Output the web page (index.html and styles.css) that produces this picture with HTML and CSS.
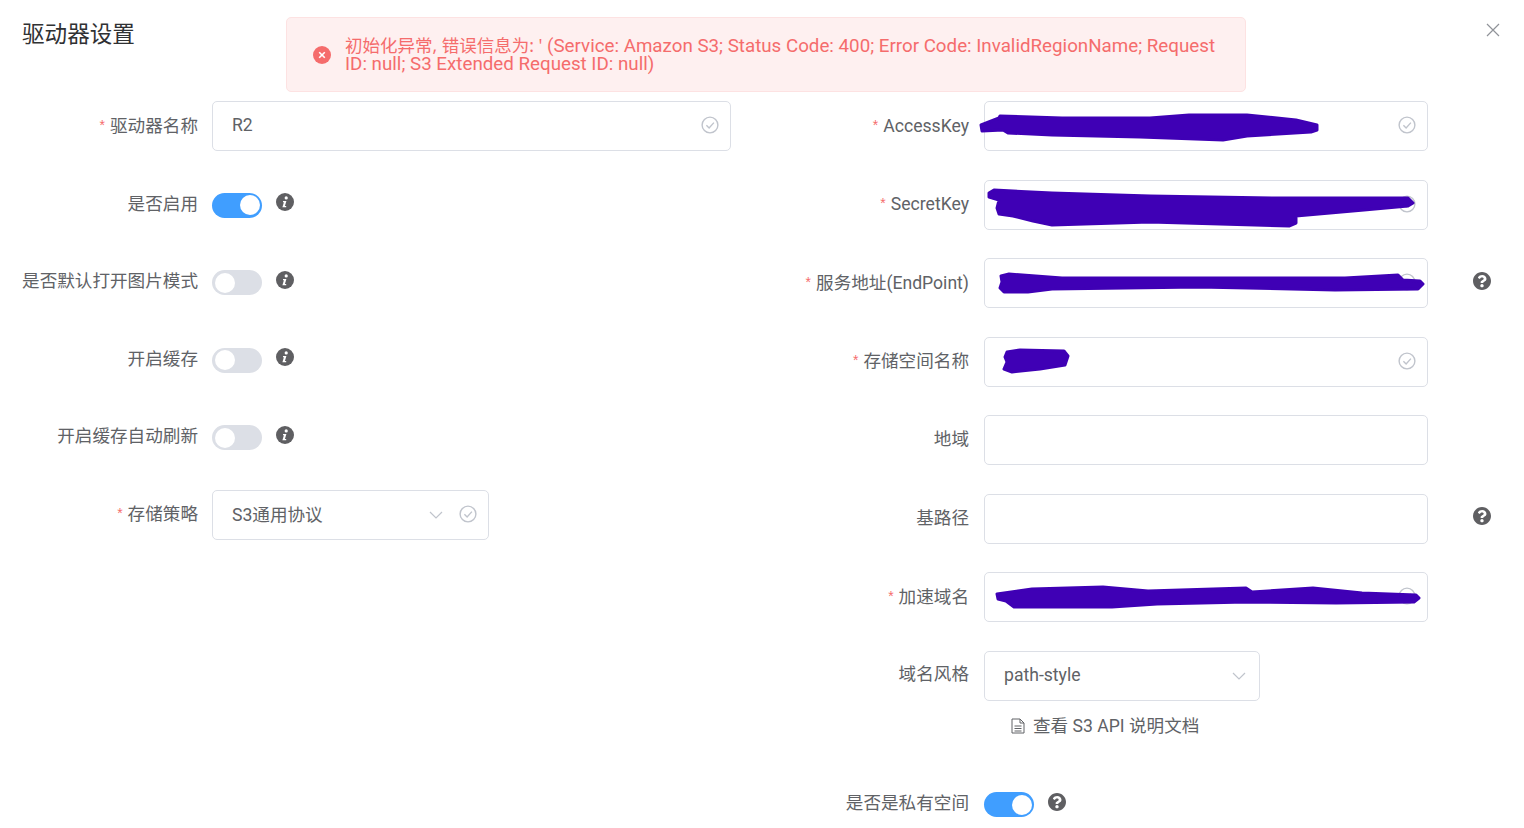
FILE: index.html
```html
<!DOCTYPE html>
<html lang="zh-CN">
<head>
<meta charset="utf-8">
<title>驱动器设置</title>
<link rel="stylesheet" href="styles.css">
</head>
<body>
<svg width="0" height="0" class="defs">
  <defs>
    <symbol id="check" viewBox="0 0 18 18"><circle cx="9" cy="9" r="7.9" fill="none" stroke="#c0c4cc" stroke-width="1.4"/><path d="M5.4 9.2l2.7 2.7 4.8-5.3" fill="none" stroke="#c0c4cc" stroke-width="1.4"/></symbol>
    <symbol id="chev" viewBox="0 0 14 14"><path d="M1 4l6 6 6-6" fill="none" stroke="#c0c4cc" stroke-width="1.2"/></symbol>
    <symbol id="info" viewBox="0 0 18 18"><circle cx="9" cy="9" r="9" fill="#5f5f62"/><circle cx="10.2" cy="4.9" r="1.6" fill="#fff"/><path d="M7 8h3.4l-1.5 5h1.3v1.2H6.4l1.5-5H7z" fill="#fff"/></symbol>
    <symbol id="ask" viewBox="8 8 496 496"><path fill="#5f5f62" d="M504 256c0 136.997-111.043 248-248 248S8 392.997 8 256C8 119.083 119.043 8 256 8s248 111.083 248 248zM262.655 90c-54.497 0-89.255 22.957-116.549 63.758-3.536 5.286-2.353 12.415 2.715 16.258l34.699 26.31c5.205 3.947 12.621 3.008 16.665-2.122 17.864-22.658 30.113-35.797 57.303-35.797 20.429 0 45.698 13.148 45.698 32.958 0 14.976-12.363 22.667-32.534 33.976C247.128 238.528 216 254.941 216 296v4c0 6.627 5.373 12 12 12h56c6.627 0 12-5.373 12-12v-1.333c0-28.462 83.186-29.647 83.186-106.667 0-58.002-60.165-102-116.531-102zM256 338c-25.365 0-46 20.635-46 46 0 25.364 20.635 46 46 46s46-20.636 46-46c0-25.365-20.635-46-46-46z"/></symbol>
  </defs>
</svg>

<header class="head">
  <h1 class="title">驱动器设置</h1>
  <svg class="close" viewBox="0 0 14 14"><path d="M1 1l12 12M13 1L1 13" stroke="#909399" stroke-width="1.2" fill="none"/></svg>
</header>

<div class="alert">
  <svg class="alert-icon" viewBox="0 0 18 18"><circle cx="9" cy="9" r="9" fill="#f56c6c"/><path d="M6.2 6.2l5.6 5.6M11.8 6.2l-5.6 5.6" stroke="#fff" stroke-width="1.6"/></svg>
  <p class="alert-text"><span class="cjk">初始化异常, 错误信息为: '</span> (Service: Amazon S3; Status Code: 400; Error Code: InvalidRegionName; Request ID: null; S3 Extended Request ID: null)</p>
</div>

<main class="form">
  <section class="col col-left">
    <div class="row row-first">
      <label class="label"><span class="req">*</span>驱动器名称</label>
      <div class="input input-wide"><span class="val">R2</span><svg class="ico"><use href="#check"/></svg></div>
    </div>
    <div class="row">
      <label class="label">是否启用</label>
      <span class="switch on"></span><svg class="tip"><use href="#info"/></svg>
    </div>
    <div class="row">
      <label class="label">是否默认打开图片模式</label>
      <span class="switch"></span><svg class="tip"><use href="#info"/></svg>
    </div>
    <div class="row">
      <label class="label">开启缓存</label>
      <span class="switch"></span><svg class="tip"><use href="#info"/></svg>
    </div>
    <div class="row">
      <label class="label">开启缓存自动刷新</label>
      <span class="switch"></span><svg class="tip"><use href="#info"/></svg>
    </div>
    <div class="row">
      <label class="label"><span class="req">*</span>存储策略</label>
      <div class="input input-select"><span class="val">S3通用协议</span><svg class="chev"><use href="#chev"/></svg><svg class="ico ico-after"><use href="#check"/></svg></div>
    </div>
  </section>

  <section class="col col-right">
    <div class="row">
      <label class="label"><span class="req">*</span>AccessKey</label>
      <div class="input input-full"><span class="val"></span><svg class="ico"><use href="#check"/></svg></div>
    </div>
    <div class="row">
      <label class="label"><span class="req">*</span>SecretKey</label>
      <div class="input input-full"><span class="val"></span><svg class="ico"><use href="#check"/></svg></div>
    </div>
    <div class="row">
      <label class="label"><span class="req">*</span>服务地址(EndPoint)</label>
      <div class="input input-full"><span class="val"></span><svg class="ico"><use href="#check"/></svg></div>
      <svg class="tip tip-far"><use href="#ask"/></svg>
    </div>
    <div class="row">
      <label class="label"><span class="req">*</span>存储空间名称</label>
      <div class="input input-full"><span class="val"></span><svg class="ico"><use href="#check"/></svg></div>
    </div>
    <div class="row">
      <label class="label">地域</label>
      <div class="input input-full"></div>
    </div>
    <div class="row">
      <label class="label">基路径</label>
      <div class="input input-full"></div>
      <svg class="tip tip-far"><use href="#ask"/></svg>
    </div>
    <div class="row">
      <label class="label"><span class="req">*</span>加速域名</label>
      <div class="input input-full"><span class="val"></span><svg class="ico"><use href="#check"/></svg></div>
    </div>
    <div class="row row-tall">
      <label class="label">域名风格</label>
      <div class="stack">
        <div class="input input-style"><span class="val">path-style</span><svg class="chev chev-end"><use href="#chev"/></svg></div>
        <a class="doc"><svg class="doc-icon" viewBox="0 0 14 16"><path d="M1 1h8l4 4v10H1zM9 1v4h4M3.5 8h7M3.5 10.5h7M3.5 13h7" fill="none" stroke="#606266" stroke-width="1"/></svg>查看 S3 API 说明文档</a>
      </div>
    </div>
    <div class="row">
      <label class="label">是否是私有空间</label>
      <span class="switch on"></span><svg class="tip"><use href="#ask"/></svg>
    </div>
  </section>
</main>

<svg class="scribbles" viewBox="0 0 1524 828">
  <path d="M981 125L999 118L1000 116L1062 118L1150 118L1189 115L1247 115L1296 120L1317 125L1317 130L1311 132L1247 136L1223 140L1140 137L1052 135L1008 133L1003 130L982 131Z"/>
  <path d="M989 193L994 190L1052 193L1150 196L1272 198L1408 198L1413 203L1408 206L1364 210L1296 216L1296 223L1289 226L1150 222L1052 225L1033 221L1013 216L999 214L997 208L999 200L989 197Z"/>
  <path d="M1001 276L1009 274L1062 278L1199 278L1345 278L1398 275L1403 280L1420 281L1423 284L1418 289L1335 290L1199 287L1052 289L1028 292L1004 292L1000 288L1002 282Z"/>
  <path d="M1007 352L1020 350L1064 351L1068 356L1065 365L1040 369L1012 372L1004 369L1007 362L1005 357Z"/>
  <path d="M997 594L1032 589L1103 587L1148 591L1246 588L1252 592L1313 588L1362 593L1416 595L1419 598L1414 602L1336 603L1246 602L1157 604L1112 607L1014 607L1006 601L998 599Z"/>
</svg>
</body>
</html>
```

FILE: styles.css
```css
* { box-sizing: border-box; }
html, body { margin: 0; height: 100%; overflow: hidden; }
body {
  position: relative;
  background: #fff;
  color: #606266;
  font-family: Roboto, "Noto Sans CJK SC", sans-serif;
  font-size: 17.6px;
}
.defs { position: absolute; }
.head {
  display: flex;
  justify-content: space-between;
  align-items: flex-start;
  height: 101px;
  padding: 0 24px 0 22px;
}
.title {
  margin: 19px 0 0;
  font-size: 22.6px;
  font-weight: 400;
  line-height: 32px;
  color: #303133;
}
.close { width: 14px; height: 14px; margin-top: 23px; }
.alert {
  position: absolute;
  left: 286px;
  top: 17px;
  width: 960px;
  height: 75px;
  display: flex;
  align-items: center;
  gap: 14px;
  padding: 0 24px 0 26px;
  background: #fef0f0;
  border: 1px solid #fde2e2;
  border-radius: 5px;
}
.alert-icon { width: 18px; height: 18px; flex: none; }
.alert-text {
  margin: 0;
  font-size: 18.75px;
  line-height: 18px;
  color: #f56c6c;
}
.cjk { font-family: "Noto Sans", "Noto Sans CJK SC", sans-serif; font-size: 17.5px; }
.form { display: grid; grid-template-columns: 760px 1fr; }
.col { display: flex; flex-direction: column; }
.col-left { padding-left: 22px; gap: 27.5px; --label: 190px; --pad: 14px; }
.col-right { gap: 28.5px; --label: 224px; --pad: 15px; }
.row { display: flex; align-items: center; height: 50px; }
.row-first { margin-bottom: 1px; }
.row-tall { height: 100px; align-items: flex-start; }
.row-tall .label { margin-top: -2px; }
.label {
  flex: none;
  width: var(--label);
  padding-right: var(--pad);
  padding-bottom: 2px;
  text-align: right;
  line-height: 50px;
  white-space: nowrap;
}
.req {
  color: #f56c6c;
  margin-right: 5px;
  font-family: "Liberation Sans", sans-serif;
  font-size: 14px;
  vertical-align: 2px;
}
.input {
  position: relative;
  display: flex;
  align-items: center;
  flex: none;
  height: 50px;
  padding: 0 19px 2px;
  background: #fff;
  border: 1px solid #dcdfe6;
  border-radius: 5px;
}
.input-wide { width: 519px; }
.input-select { width: 277px; }
.input-full { width: 444px; }
.input-style { width: 276px; }
.val { flex: 1; }
.ico { width: 18px; height: 18px; flex: none; margin-right: -8px; }
.ico-after { margin-left: 16px; }
.chev { width: 14px; height: 14px; flex: none; margin-top: 3px; }
.chev-end { margin-right: -6px; }
.switch {
  position: relative;
  flex: none;
  width: 50px;
  height: 25px;
  margin-top: 1px;
  border-radius: 13px;
  background: #dcdfe6;
}
.switch::after {
  content: "";
  position: absolute;
  left: 2.5px;
  top: 2.5px;
  width: 20px;
  height: 20px;
  border-radius: 50%;
  background: #fff;
}
.switch.on { background: #409eff; }
.switch.on::after { left: 27.5px; }
.tip { width: 18px; height: 18px; flex: none; margin: 0 0 5px 14px; }
.tip-far { margin-left: 45px; }
.stack { display: flex; flex-direction: column; }
.doc {
  display: flex;
  align-items: center;
  height: 50px;
  padding-left: 27px;
  padding-bottom: 2px;
}
.doc-icon { width: 14px; height: 16px; margin: 3px 8px 0 0; flex: none; }
.scribbles {
  position: absolute;
  left: 0;
  top: 0;
  width: 1524px;
  height: 828px;
  pointer-events: none;
}
.scribbles path { fill: #3f00b5; stroke: #3f00b5; stroke-width: 3; stroke-linejoin: round; }
```
